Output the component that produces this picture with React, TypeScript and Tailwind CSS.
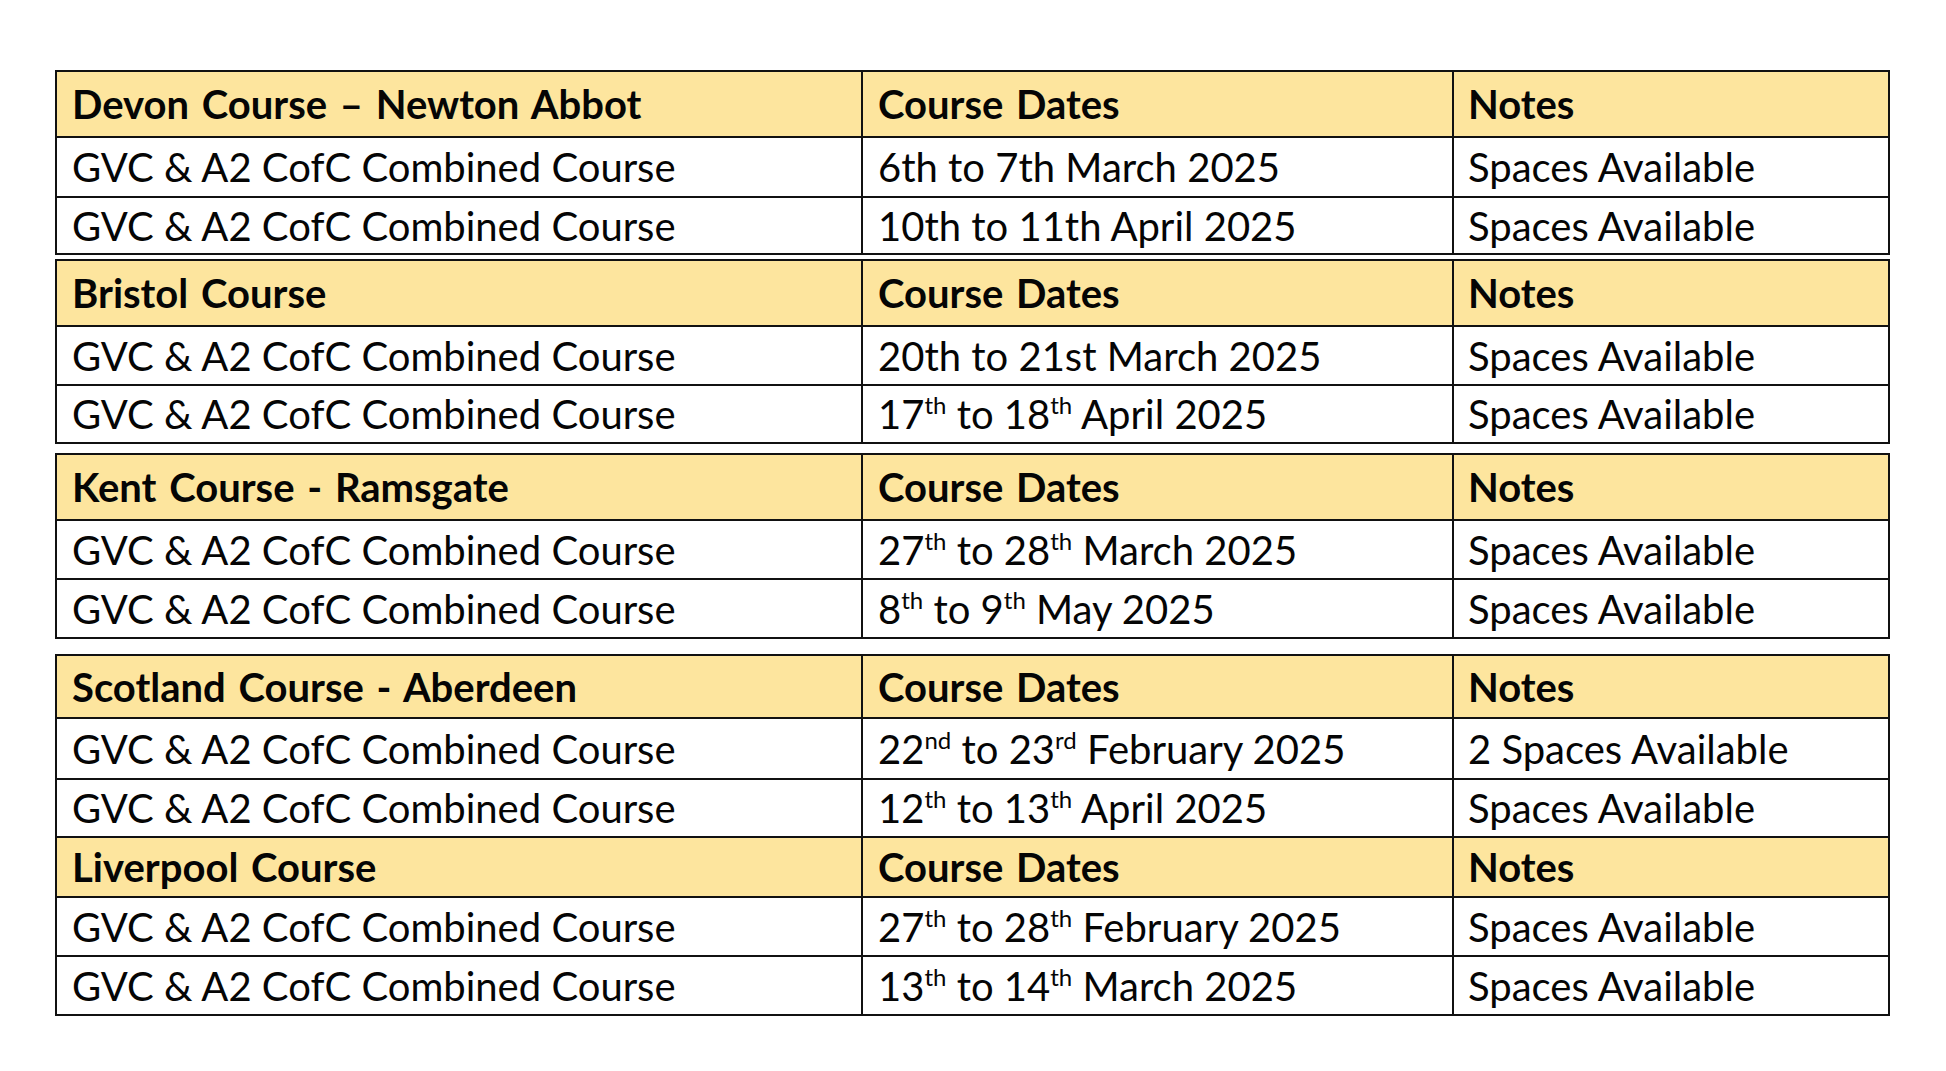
import React from 'react';

type Row = { course: string; dates: React.ReactNode; notes: string; h: string };
type Section = { title: string; h: string; rows: Row[] };
type Block = { gap: string; sections: Section[] };

const COURSE = 'GVC & A2 CofC Combined Course';

function Ord({ n, s }: { n: string; s: string }) {
  return (
    <>
      {n}
      <sup className="text-[0.6em] top-[-0.62em]">{s}</sup>
    </>
  );
}

const blocks: Block[] = [
  {
    gap: 'mt-0',
    sections: [
      {
        title: 'Devon Course – Newton Abbot',
        h: 'h-[66px]',
        rows: [
          { course: COURSE, dates: '6th to 7th March 2025', notes: 'Spaces Available', h: 'h-[60px]' },
          { course: COURSE, dates: '10th to 11th April 2025', notes: 'Spaces Available', h: 'h-[55px]' },
        ],
      },
    ],
  },
  {
    gap: 'mt-[4px]',
    sections: [
      {
        title: 'Bristol Course',
        h: 'h-[66px]',
        rows: [
          { course: COURSE, dates: '20th to 21st March 2025', notes: 'Spaces Available', h: 'h-[59px]' },
          {
            course: COURSE,
            dates: (
              <>
                <Ord n="17" s="th" /> to <Ord n="18" s="th" /> April 2025
              </>
            ),
            notes: 'Spaces Available',
            h: 'h-[56px]',
          },
        ],
      },
    ],
  },
  {
    gap: 'mt-[9px]',
    sections: [
      {
        title: 'Kent Course - Ramsgate',
        h: 'h-[66px]',
        rows: [
          {
            course: COURSE,
            dates: (
              <>
                <Ord n="27" s="th" /> to <Ord n="28" s="th" /> March 2025
              </>
            ),
            notes: 'Spaces Available',
            h: 'h-[59px]',
          },
          {
            course: COURSE,
            dates: (
              <>
                <Ord n="8" s="th" /> to <Ord n="9" s="th" /> May 2025
              </>
            ),
            notes: 'Spaces Available',
            h: 'h-[57px]',
          },
        ],
      },
    ],
  },
  {
    gap: 'mt-[15px]',
    sections: [
      {
        title: 'Scotland Course - Aberdeen',
        h: 'h-[63px]',
        rows: [
          {
            course: COURSE,
            dates: (
              <>
                <Ord n="22" s="nd" /> to <Ord n="23" s="rd" /> February 2025
              </>
            ),
            notes: '2 Spaces Available',
            h: 'h-[61px]',
          },
          {
            course: COURSE,
            dates: (
              <>
                <Ord n="12" s="th" /> to <Ord n="13" s="th" /> April 2025
              </>
            ),
            notes: 'Spaces Available',
            h: 'h-[58px]',
          },
        ],
      },
      {
        title: 'Liverpool Course',
        h: 'h-[60px]',
        rows: [
          {
            course: COURSE,
            dates: (
              <>
                <Ord n="27" s="th" />
                {' '}to <Ord n="28" s="th" /> February 2025
              </>
            ),
            notes: 'Spaces Available',
            h: 'h-[59px]',
          },
          {
            course: COURSE,
            dates: (
              <>
                <Ord n="13" s="th" /> to <Ord n="14" s="th" /> March 2025
              </>
            ),
            notes: 'Spaces Available',
            h: 'h-[57px]',
          },
        ],
      },
    ],
  },
];

const cols = 'grid grid-cols-[806px_591px_434px]';

function Cell({ children, last, bold }: { children: React.ReactNode; last?: boolean; bold?: boolean }) {
  return (
    <div
      className={
        'flex items-center whitespace-pre ' +
        (last ? 'pl-[14px] ' : 'pl-[15px] border-r-2 border-[#111] ') +
        (bold ? 'font-bold [word-spacing:3px]' : 'font-normal')
      }
    >
      <span>{children}</span>
    </div>
  );
}

export default function App() {
  return (
    <div
      className="min-h-screen w-full bg-white pt-[70px] pl-[55px] text-[40px] leading-none text-[#050505]"
      style={{ fontFamily: 'Lato, "Open Sans", sans-serif' }}
    >
      {blocks.map((b, bi) => (
        <div key={bi} className={'w-[1835px] border-2 border-[#111] ' + b.gap}>
          {b.sections.map((s, si) => {
            const lastSection = si === b.sections.length - 1;
            return (
              <React.Fragment key={si}>
                <div className={cols + ' bg-[#fde59e] border-b-2 border-[#111] ' + s.h}>
                  <Cell bold>{s.title}</Cell>
                  <Cell bold>Course Dates</Cell>
                  <Cell bold last>
                    Notes
                  </Cell>
                </div>
                {s.rows.map((r, ri) => {
                  const lastRow = lastSection && ri === s.rows.length - 1;
                  return (
                    <div key={ri} className={cols + ' ' + r.h + (lastRow ? '' : ' border-b-2 border-[#111]')}>
                      <Cell>{r.course}</Cell>
                      <Cell>{r.dates}</Cell>
                      <Cell last>{r.notes}</Cell>
                    </div>
                  );
                })}
              </React.Fragment>
            );
          })}
        </div>
      ))}
    </div>
  );
}
